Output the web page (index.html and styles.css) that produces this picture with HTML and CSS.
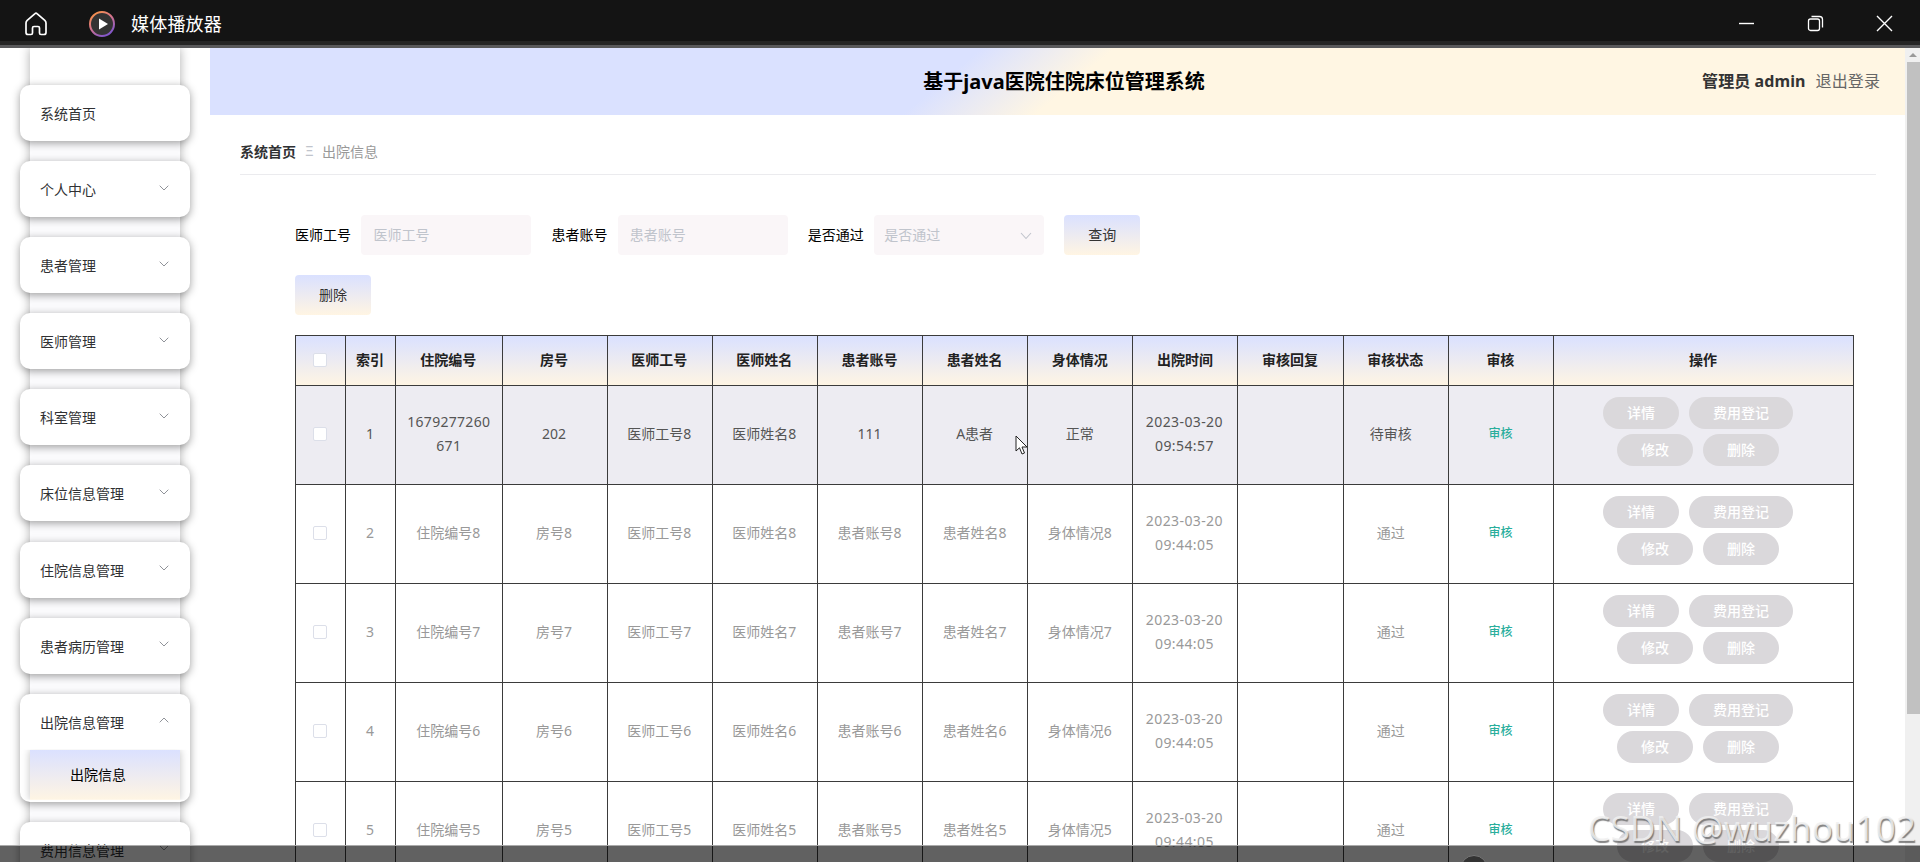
FILE: index.html
```html
<!DOCTYPE html>
<html lang="zh-CN">
<head>
<meta charset="utf-8">
<title>媒体播放器</title>
<link rel="stylesheet" href="styles.css">
</head>
<body>
<div class="titlebar">
  <svg class="home" width="24" height="26" viewBox="0 0 24 26"><path d="M2 12Q2 10.300 3.200 9.300L11 2.600Q12 1.700 13 2.600L20.800 9.300Q22 10.300 22 12V21.500Q22 23.500 20 23.500H17Q15.500 23.500 15.500 22V17Q15.500 15.500 14 15.500H10Q8.500 15.500 8.500 17V22Q8.500 23.500 7 23.500H4Q2 23.500 2 21.500Z" fill="none" stroke="#fff" stroke-width="1.700"/></svg>
  <svg class="player" width="26" height="26" viewBox="0 0 26 26"><defs><linearGradient id="ring" x1="0" y1="0" x2=".6" y2="1"><stop offset="0" stop-color="#ff9838"/><stop offset=".5" stop-color="#d8768a"/><stop offset="1" stop-color="#8457c8"/></linearGradient></defs><circle cx="13" cy="13" r="12" fill="#333" stroke="url(#ring)" stroke-width="2"/><path d="M10 7.500V18.500L19 13Z" fill="#fff"/></svg>
  <span class="app-name">媒体播放器</span>
  <div class="window-buttons">
    <svg width="17" height="17" viewBox="0 0 17 17"><path d="M1 8.500H16" stroke="#fff" stroke-width="1.400"/></svg>
    <svg width="17" height="17" viewBox="0 0 17 17" fill="none" stroke="#fff" stroke-width="1.300"><rect x="1.500" y="4" width="11" height="11.500" rx="2"/><path d="M4.500 1.500H12.500Q15.500 1.500 15.500 4.500V12.500"/></svg>
    <svg width="17" height="17" viewBox="0 0 17 17"><path d="M1 1L16 16M16 1L1 16" stroke="#fff" stroke-width="1.400"/></svg>
  </div>
</div>
<div class="app">
  <aside class="side"><nav class="menu" id="menu"></nav></aside>
  <main class="main">
    <header class="header">
      <h1>基于java医院住院床位管理系统</h1>
      <div class="user"><b>管理员 admin</b><span>退出登录</span></div>
    </header>
    <div class="crumbs"><b>系统首页</b><i>Ξ</i><span>出院信息</span></div>
    <section class="content">
      <div class="filters">
        <label>医师工号</label><div class="field">医师工号</div>
        <label>患者账号</label><div class="field">患者账号</div>
        <label>是否通过</label><div class="field select">是否通过<svg width="12" height="8" viewBox="0 0 12 8"><path d="M1 1L6 6.500L11 1" fill="none" stroke="#c0c4cc" stroke-width="1.100"/></svg></div>
        <div class="btn">查询</div>
      </div>
      <div class="btn">删除</div>
      <table class="grid">
        <colgroup><col class="c-small"><col class="c-small"><col class="c-code"><col><col><col><col><col><col><col><col><col><col><col class="c-ops"></colgroup>
        <thead><tr id="head"></tr></thead>
        <tbody id="rows"></tbody>
      </table>
    </section>
  </main>
  <div class="scroll"><svg width="15" height="14" viewBox="0 0 15 14"><path d="M4 9L8 5L12 9Z" fill="#999"/></svg><div class="thumb"></div></div>
</div>
<div class="player-bar"><div class="player-knob"></div></div>
<div class="watermark">CSDN @wuzhou102</div>
<svg class="cursor" width="14" height="21" viewBox="0 0 14 21"><path d="M1 1V16L4.500 12.800L7 19L9.500 18L7 12H12Z" fill="#fff" stroke="#222" stroke-width="1"/></svg>
<script src="app.js"></script>
</body>
</html>
```
FILE: styles.css
```css
* { box-sizing: border-box; }
body { margin: 0; height: 862px; overflow: hidden; display: flex; flex-direction: column; background: #fff; font: 14px "Noto Sans", "Noto Sans CJK SC", sans-serif; color: #303133; }
svg { display: block; }
.titlebar { flex: none; height: 48px; display: flex; align-items: center; padding: 0 24px; background: #141414; border-bottom: 3px solid #59595b; box-shadow: inset 0 -4px #252525; color: #fff; }
.home { margin-top: 2px; }
.player { margin: 3px 0 0 41px; }
.app-name { margin: 3px 0 0 16px; font-size: 18px; line-height: 24px; letter-spacing: .2px; }
.window-buttons { margin: 2px 3px 0 auto; display: flex; gap: 52px; }
.app { flex: 1; min-height: 0; display: flex; overflow: hidden; }
.side { flex: none; width: 210px; padding: 0 30px; overflow: hidden; }
.menu { width: 150px; min-height: 900px; padding-top: 37px; box-shadow: 0 0 10px rgba(0,0,0,.32); background: linear-gradient(#fff 37px, #fbfbfd 37px); }
.item { margin: 0 -10px 20.1px; border-radius: 10px; background: #fff; box-shadow: 0 2px 9px rgba(0,0,0,.38); }
.item-title { height: 56px; padding: 0 21px 0 20px; display: flex; align-items: center; justify-content: space-between; border-radius: 10px; }
.item-title svg { margin-top: -3px; }
.item.open { padding-bottom: 2px; }
.sub { height: 50px; margin: 0 10px; display: flex; align-items: center; padding: 0 0 2px 40px; background: linear-gradient(#dbe1ff, #fff5e3); color: #000; box-shadow: 0 0 8px rgba(0,0,0,.25); clip-path: inset(0 -10px 0 -10px); }
.main { flex: 1; min-width: 0; }
.header { height: 67px; display: grid; grid-template-columns: 1fr auto 1fr; align-items: center; padding: 0 25px 0 38px; background: linear-gradient(140deg, #dae1ff 43.500%, #fff6e3 51%); }
h1 { grid-column: 2; margin: 0; font-size: 20px; line-height: 28px; font-weight: 700; color: #000; }
.user { display: flex; justify-content: flex-end; gap: 10px; margin-top: -3px; font-size: 16px; letter-spacing: .1px; color: #666; }
.user b { color: #333; }
.crumbs { height: 60px; margin: 0 29px 0 30px; padding-top: 12px; border-bottom: 1px solid #ebebee; display: flex; align-items: center; color: #999; }
.crumbs b { color: #303133; }
.crumbs i { margin: 0 9px 0 9px; width: 8px; font-style: normal; color: #c0c4cc; }
.content { padding: 40px 0 0 85px; }
.filters { display: flex; align-items: center; height: 40px; margin-bottom: 20px; color: #000; }
.filters label { flex: none; width: 66.4px; padding-bottom: 2px; }
.field { flex: none; width: 170px; height: 40px; margin-right: 20px; padding: 0 12px 2px; border-radius: 4px; background: #faf6f8; color: #c0c4cc; display: flex; align-items: center; }
.select { justify-content: space-between; padding-left: 10px; }
.select svg { margin-top: 3px; }
.btn { width: 76px; height: 40px; padding-bottom: 2px; border-radius: 4px; display: flex; align-items: center; justify-content: center; background: linear-gradient(#dae1ff, #fff5e3); color: #333; }
.grid { width: 1559px; margin-top: 20px; table-layout: fixed; border-collapse: collapse; text-align: center; color: #999; }
.grid th, .grid td { border: 1px solid #3b3b3b; padding: 0 11px 0 10px; line-height: 24px; word-break: break-all; }
.grid th { height: 49.500px; padding: 0 1px 1px 0; color: #222; }
.grid thead tr { background: linear-gradient(#dae1ff, #fff5e3); }
.grid td { height: 99px; padding-bottom: 1.500px; }
.grid td.date { padding: 0 9px 1.500px 7px; letter-spacing: .4px; }
.grid td.code { padding: 0 8px 1.500px; letter-spacing: .3px; }
.grid td.state { padding-right: 20px; }
.grid tr.hover { background: #edecf2; color: #555; }
.c-small { width: 50px; }
.c-code { width: 106.500px; }
.c-ops { width: 300px; }
.check { width: 14px; height: 14px; margin: 0 auto; border: 1px solid #dcdfe9; border-radius: 2px; background: #fff; }
.audit { font-size: 12px; font-weight: 500; color: #2aae9c; }
.ops { display: flex; flex-wrap: wrap; justify-content: center; gap: 5px 10px; width: 230px; margin: -5px 0 0 19px; }
.pill { height: 32px; padding: 0 24px; border-radius: 16px; background: #dad8db; color: #fff; line-height: 31px; font-weight: 500; }
.scroll { flex: none; width: 15px; background: #f0f0f0; }
.thumb { margin-left: 2px; height: 652px; background: #c1c1c1; }
.player-bar { position: absolute; left: 0; top: 845px; width: 1920px; height: 17px; background: rgba(0,0,0,.62); border-top: 1px solid #aaa; overflow: hidden; }
.player-knob { position: absolute; left: 1460px; top: 9px; width: 28px; height: 28px; border-radius: 50%; background: #333; border: 1px solid #777; }
.watermark { position: absolute; left: 1588px; top: 804px; font: 35px/48px "Open Sans", sans-serif; letter-spacing: .4px; white-space: nowrap; color: rgba(240,240,240,.85); text-shadow: 1px 2px 1px rgba(100,100,100,.8); }
.cursor { position: absolute; left: 1015px; top: 435px; }
```
FILE: app.js
```js
const arrow = up => `<svg width="10" height="6" viewBox="0 0 10 6"><path d="${up ? 'M.7 5.300L5 1L9.300 5.300' : 'M.7 .7L5 5L9.300 .7'}" fill="none" stroke="#909399" stroke-width="1"/></svg>`;
const menu = ['系统首页', '个人中心', '患者管理', '医师管理', '科室管理', '床位信息管理', '住院信息管理', '患者病历管理', '出院信息管理', '费用信息管理'];
document.getElementById('menu').innerHTML = menu.map((name, i) =>
  `<div class="item${i === 8 ? ' open' : ''}"><div class="item-title">${name}${i ? arrow(i === 8) : ''}</div>${i === 8 ? '<div class="sub">出院信息</div>' : ''}</div>`).join('');

const check = '<div class="check"></div>';
const head = [check, '索引', '住院编号', '房号', '医师工号', '医师姓名', '患者账号', '患者姓名', '身体情况', '出院时间', '审核回复', '审核状态', '审核', '操作'];
document.getElementById('head').innerHTML = head.map(t => `<th>${t}</th>`).join('');

const rows = [['1679277260671', '202', '医师工号8', '医师姓名8', '111', 'A患者', '正常', '2023-03-20 09:54:57', '', '待审核']];
for (const n of [8, 7, 6, 5]) {
  rows.push(['住院编号', '房号', '医师工号', '医师姓名', '患者账号', '患者姓名', '身体情况'].map(t => t + n).concat('2023-03-20 09:44:05', '', '通过'));
}
const ops = '<div class="ops">' + ['详情', '费用登记', '修改', '删除'].map(t => `<span class="pill">${t}</span>`).join('') + '</div>';
const cellClass = { 2: 'code', 9: 'date', 11: 'state' };
document.getElementById('rows').innerHTML = rows.map((r, i) =>
  `<tr class="${i ? '' : 'hover'}">` + [check, i + 1, ...r, '<span class="audit">审核</span>', ops].map((t, c) => `<td class="${cellClass[c] && !(c === 2 && i) ? cellClass[c] : ''}">${t}</td>`).join('') + '</tr>').join('');
```
